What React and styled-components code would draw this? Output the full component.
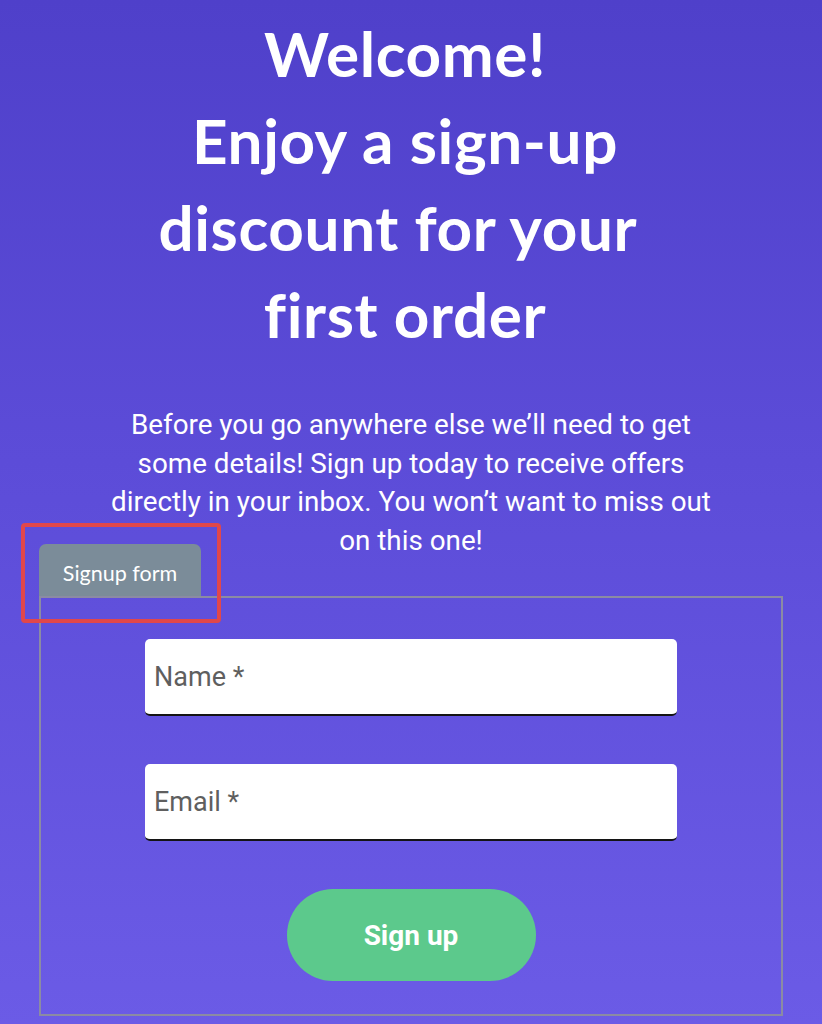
import React from "react";
import styled, { createGlobalStyle } from "styled-components";

const GlobalStyle = createGlobalStyle`
  html, body {
    margin: 0;
    padding: 0;
  }
  body {
    background: linear-gradient(180deg, #4f40ca 0%, #5c4cd8 45%, #6b5be6 100%);
    min-height: 100vh;
  }
  * { box-sizing: border-box; }
`;

const Page = styled.main`
  min-height: 1024px;
  display: flex;
  flex-direction: column;
  align-items: center;
  background: linear-gradient(180deg, #4f40ca 0%, #5c4cd8 45%, #6b5be6 100%);
  overflow: hidden;
`;

const Heading = styled.h1`
  margin: 10px 0 0;
  padding-right: 12px;
  font-family: Lato, "Open Sans", sans-serif;
  font-weight: 700;
  font-size: 62px;
  line-height: 87px;
  letter-spacing: 0.6px;
  color: #ffffff;
  text-align: center;
`;

const Intro = styled.p`
  margin: 48px 0 0;
  font-family: Roboto, "Liberation Sans", sans-serif;
  font-size: 27.8px;
  line-height: 38.5px;
  color: #ffffff;
  text-align: center;
  white-space: nowrap;
`;

const FormSection = styled.section`
  position: relative;
  align-self: stretch;
  margin: -16px 39px 0;
  display: flex;
  flex-direction: column;
  align-items: flex-start;
`;

const Tab = styled.div`
  width: 162px;
  height: 52px;
  display: flex;
  align-items: center;
  justify-content: center;
  padding-top: 6px;
  background: #7b8c99;
  border-radius: 7px 7px 0 0;
  font-family: Lato, "Open Sans", sans-serif;
  font-size: 21.5px;
  color: #ffffff;
`;

const Highlight = styled.div`
  position: absolute;
  left: -18px;
  top: -21px;
  width: 200px;
  height: 100px;
  border: 4px solid #e1474b;
  border-radius: 4px;
  pointer-events: none;
`;

const Frame = styled.form`
  align-self: stretch;
  border: 2px solid #8b8ba3;
  padding: 41px 0 33px;
  display: flex;
  flex-direction: column;
  align-items: center;
  gap: 48px;
`;

const Input = styled.input`
  width: 532px;
  height: 77px;
  padding: 0 9px;
  border: none;
  border-bottom: 2px solid #141414;
  border-radius: 5px;
  background: #ffffff;
  font-family: Roboto, "Liberation Sans", sans-serif;
  font-size: 27px;
  color: #333;
  outline: none;
  &::placeholder {
    color: #5f5f5f;
  }
`;

const Button = styled.button`
  width: 249px;
  height: 92px;
  border: none;
  border-radius: 46px;
  background: #5cc98c;
  color: #ffffff;
  font-family: Roboto, "Liberation Sans", sans-serif;
  font-weight: 700;
  font-size: 28px;
  cursor: pointer;
`;

export default function App() {
  return (
    <>
      <GlobalStyle />
      <Page>
        <Heading>
          Welcome!
          <br />
          Enjoy a sign-up
          <br />
          discount for your{"\u00a0"}
          <br />
          first order
        </Heading>
        <Intro>
          Before you go anywhere else we’ll need to get
          <br />
          some details! Sign up today to receive offers
          <br />
          directly in your inbox. You won’t want to miss out
          <br />
          on this one!
        </Intro>
        <FormSection>
          <Tab>Signup form</Tab>
          <Frame onSubmit={(e) => e.preventDefault()}>
            <Input type="text" placeholder="Name *" />
            <Input type="email" placeholder="Email *" />
            <Button type="submit">Sign up</Button>
          </Frame>
          <Highlight />
        </FormSection>
      </Page>
    </>
  );
}
